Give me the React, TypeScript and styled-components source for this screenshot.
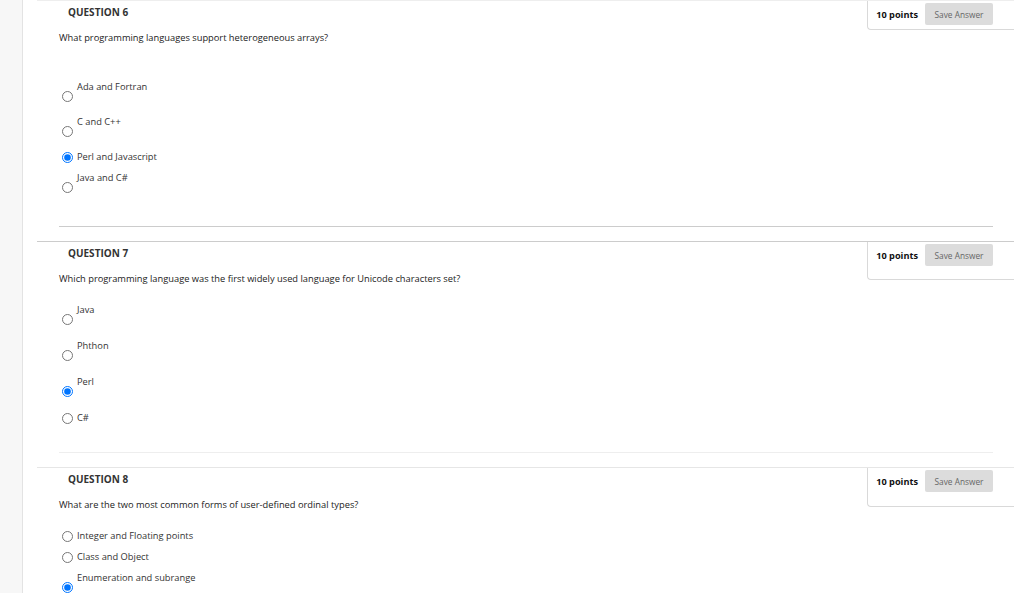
import React from 'react';
import styled, { createGlobalStyle } from 'styled-components';

const GlobalStyle = createGlobalStyle`
  html, body { margin: 0; padding: 0; background: #fff; }
  body {
    font-family: "Open Sans", "Liberation Sans", Arial, sans-serif;
    color: #222;
  }
`;

const Page = styled.div`
  display: flex;
  min-height: 100vh;
`;

const Gutter = styled.div`
  width: 22px;
  flex-shrink: 0;
  background: #f7f7f7;
  border-right: 1px solid #e3e3e3;
`;

const Main = styled.main`
  flex: 1;
  min-width: 0;
  padding: 0 10px 0 14px;
`;

const QuestionBlock = styled.section<{ $line: string }>`
  border-top: 1px solid ${p => p.$line};
`;

const Head = styled.div`
  display: grid;
  grid-template-columns: 1fr auto;
`;

const Title = styled.h2`
  grid-column: 1;
  margin: 0;
  padding: 4px 0 0 31px;
  font-size: 10px;
  line-height: 14px;
  font-weight: 700;
  color: #333;
`;

const Prompt = styled.p`
  grid-column: 1;
  margin: 13px 0 0 22px;
  font-size: 9.3px;
  line-height: 12px;
  color: #222;
`;

const PointsBox = styled.div<{ $pb: number }>`
  grid-column: 2;
  grid-row: 1 / span 2;
  align-self: start;
  display: flex;
  align-items: center;
  gap: 7px;
  padding: 2px 21px ${p => p.$pb}px 8px;
  border-left: 1px solid #d9d9d9;
  border-bottom: 1px solid #d9d9d9;
  border-bottom-left-radius: 4px;
`;

const Points = styled.span`
  font-size: 9.2px;
  font-weight: 700;
  color: #111;
`;

const SaveButton = styled.button`
  width: 68px;
  height: 22px;
  border: 0;
  border-radius: 2px;
  background: #dcdcdc;
  color: #666;
  font-family: inherit;
  font-size: 8.3px;
  padding: 0;
  cursor: pointer;
`;

const OptionList = styled.div<{ $lead: number; $gap: number }>`
  display: flex;
  flex-direction: column;
  gap: ${p => p.$gap}px;
  margin-top: ${p => 19 + p.$lead}px;
  padding: 0 0 28px 25px;
`;

const OptionRow = styled.label<{ $stacked: boolean }>`
  display: flex;
  align-items: flex-start;
  gap: 4px;
  min-height: ${p => (p.$stacked ? 26 : 12)}px;
  cursor: pointer;
`;

const Radio = styled.input<{ $stacked: boolean }>`
  width: 11px;
  height: 11px;
  margin: ${p => (p.$stacked ? 9.5 : 0.5)}px 0 0;
  flex-shrink: 0;
`;

const OptionText = styled.span`
  font-size: 9.3px;
  line-height: 12px;
  color: #333;
`;

const Separator = styled.hr<{ $line: string }>`
  margin: 0 21px 14px 22px;
  border: 0;
  border-top: 1px solid ${p => p.$line};
`;

type Option = { text: string; stacked: boolean; checked?: boolean };
type Question = {
  n: number;
  prompt: string;
  lead: number;
  gap: number;
  boxPad: number;
  topLine: string;
  sepLine?: string;
  options: Option[];
};

const questions: Question[] = [
  {
    n: 6,
    prompt: 'What programming languages support heterogeneous arrays?',
    lead: 18,
    gap: 9,
    boxPad: 4,
    topLine: '#eeeeee',
    sepLine: '#cccccc',
    options: [
      { text: 'Ada and Fortran', stacked: true },
      { text: 'C and C++', stacked: true },
      { text: 'Perl and Javascript', stacked: false, checked: true },
      { text: 'Java and C#', stacked: true },
    ],
  },
  {
    n: 7,
    prompt: 'Which programming language was the first widely used language for Unicode characters set?',
    lead: 0,
    gap: 10,
    boxPad: 13,
    topLine: '#cccccc',
    sepLine: '#eeeeee',
    options: [
      { text: 'Java', stacked: true },
      { text: 'Phthon', stacked: true },
      { text: 'Perl', stacked: true, checked: true },
      { text: 'C#', stacked: false },
    ],
  },
  {
    n: 8,
    prompt: 'What are the two most common forms of user-defined ordinal types?',
    lead: 0,
    gap: 9,
    boxPad: 14,
    topLine: '#e6e6e6',
    options: [
      { text: 'Integer and Floating points', stacked: false },
      { text: 'Class and Object', stacked: false },
      { text: 'Enumeration and subrange', stacked: true, checked: true },
    ],
  },
];

export default function App() {
  return (
    <>
      <GlobalStyle />
      <Page>
        <Gutter />
        <Main>
          {questions.map(q => (
            <QuestionBlock key={q.n} $line={q.topLine}>
              <Head>
                <Title>QUESTION {q.n}</Title>
                <Prompt>{q.prompt}</Prompt>
                <PointsBox $pb={q.boxPad}>
                  <Points>10 points</Points>
                  <SaveButton type="button">Save Answer</SaveButton>
                </PointsBox>
              </Head>
              <OptionList $lead={q.lead} $gap={q.gap}>
                {q.options.map(o => (
                  <OptionRow key={o.text} $stacked={o.stacked}>
                    <Radio
                      type="radio"
                      name={`q${q.n}`}
                      defaultChecked={o.checked}
                      $stacked={o.stacked}
                    />
                    <OptionText>{o.text}</OptionText>
                  </OptionRow>
                ))}
              </OptionList>
              {q.sepLine && <Separator $line={q.sepLine} />}
            </QuestionBlock>
          ))}
        </Main>
      </Page>
    </>
  );
}
